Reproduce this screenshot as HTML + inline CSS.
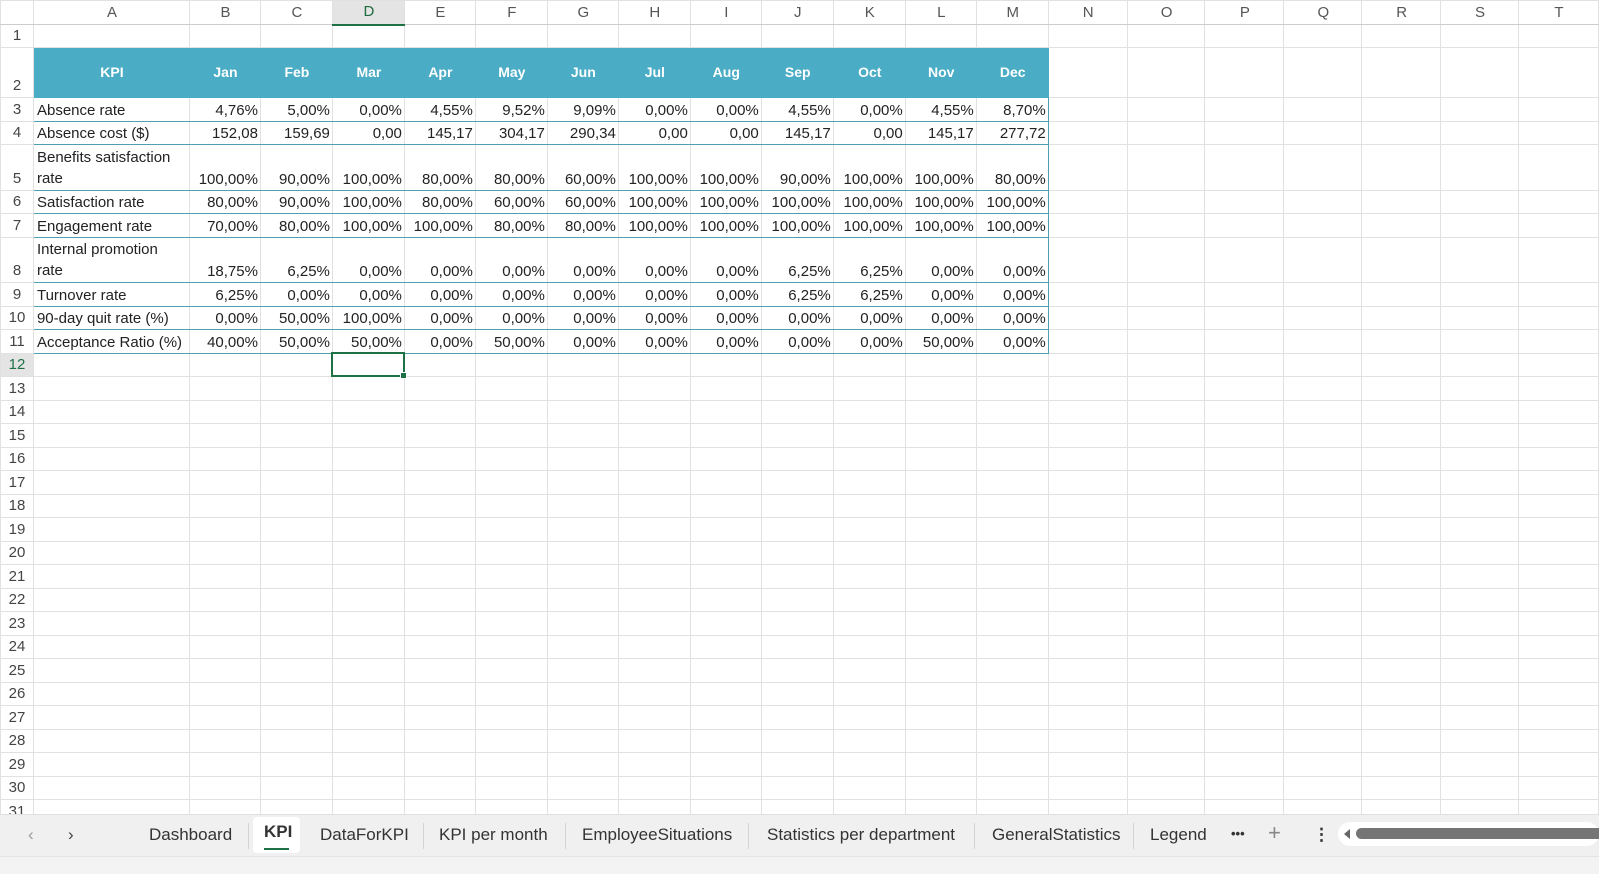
<!DOCTYPE html>
<html><head><meta charset="utf-8">
<style>
*{box-sizing:border-box;margin:0;padding:0}
body{width:1599px;height:874px;overflow:hidden;background:#fff;font-family:"Liberation Sans",sans-serif;position:relative}
table{border-collapse:collapse;table-layout:fixed;position:absolute;left:0;top:0}
td{border:1px solid #e1e1e1;font-size:15px;color:#222;white-space:nowrap;overflow:hidden;vertical-align:bottom;padding:0 2px 1px 3px;text-align:right;line-height:19px}
td.rh{text-align:center;color:#444;background:#fff;border-color:#e1e1e1;font-size:15px;padding:0 0 2px 0}
tr.ch td{background:#fff;text-align:center;color:#555;vertical-align:middle;border-bottom:1px solid #ccc;font-size:15px}
tr.ch td.sel{background:#e4e4e4;color:#1e6b3f;border-bottom:2px solid #1e7145}
td.l{text-align:left}
tr.hd td.k{background:#4aacc5;color:#fff;font-weight:bold;text-align:center;vertical-align:middle;border-color:#4aacc5;font-size:14px}
tr.d td.k{border-bottom:1px solid #4f9fb3}
td.m{border-right:1px solid #4f9fb3!important}
td.a{border-left:1px solid #4f9fb3}
.w{line-height:21px}
#sel{position:absolute;left:331px;top:352px;width:74px;height:25px;border:2px solid #1e7145}
#sel:after{content:"";position:absolute;right:-4px;bottom:-4px;width:5px;height:5px;background:#1e7145;border:1px solid #fff}
#tabs{position:absolute;left:0;top:814px;width:1599px;height:42px;background:#f0f0f0;border-top:1px solid #e0e0e0;font-size:17px;color:#333}
#tabs span{position:absolute;top:10px}
.sep{position:absolute;top:8px;width:1px;height:26px;background:#d4d4d4}
#bot{position:absolute;left:0;top:856px;width:1599px;height:18px;background:#f3f3f3;border-top:1px solid #e4e4e4}
</style></head><body>
<table>
<colgroup><col style="width:33px"><col style="width:156px"><col style="width:71px"><col style="width:72px"><col style="width:72px"><col style="width:71px"><col style="width:72px"><col style="width:71px"><col style="width:72px"><col style="width:71px"><col style="width:72px"><col style="width:72px"><col style="width:71px"><col style="width:72px"><col style="width:79px"><col style="width:78px"><col style="width:79px"><col style="width:78px"><col style="width:79px"><col style="width:78px"><col style="width:80px"></colgroup>
<tr class="ch" style="height:24px"><td style="background:#fff"></td><td>A</td><td>B</td><td>C</td><td class="sel">D</td><td>E</td><td>F</td><td>G</td><td>H</td><td>I</td><td>J</td><td>K</td><td>L</td><td>M</td><td>N</td><td>O</td><td>P</td><td>Q</td><td>R</td><td>S</td><td>T</td></tr>
<tr style="height:23px"><td class="rh">1</td><td></td><td></td><td></td><td></td><td></td><td></td><td></td><td></td><td></td><td></td><td></td><td></td><td></td><td></td><td></td><td></td><td></td><td></td><td></td><td></td></tr>
<tr class="hd" style="height:50px"><td class="rh">2</td><td class="k">KPI</td><td class="k">Jan</td><td class="k">Feb</td><td class="k">Mar</td><td class="k">Apr</td><td class="k">May</td><td class="k">Jun</td><td class="k">Jul</td><td class="k">Aug</td><td class="k">Sep</td><td class="k">Oct</td><td class="k">Nov</td><td class="k">Dec</td><td></td><td></td><td></td><td></td><td></td><td></td><td></td></tr>
<tr class="d" style="height:24px"><td class="rh">3</td><td class="k l a">Absence rate</td><td class="k">4,76%</td><td class="k">5,00%</td><td class="k">0,00%</td><td class="k">4,55%</td><td class="k">9,52%</td><td class="k">9,09%</td><td class="k">0,00%</td><td class="k">0,00%</td><td class="k">4,55%</td><td class="k">0,00%</td><td class="k">4,55%</td><td class="k m">8,70%</td><td></td><td></td><td></td><td></td><td></td><td></td><td></td></tr>
<tr class="d" style="height:23px"><td class="rh">4</td><td class="k l a">Absence cost ($)</td><td class="k">152,08</td><td class="k">159,69</td><td class="k">0,00</td><td class="k">145,17</td><td class="k">304,17</td><td class="k">290,34</td><td class="k">0,00</td><td class="k">0,00</td><td class="k">145,17</td><td class="k">0,00</td><td class="k">145,17</td><td class="k m">277,72</td><td></td><td></td><td></td><td></td><td></td><td></td><td></td></tr>
<tr class="d" style="height:46px"><td class="rh">5</td><td class="k l a w">Benefits satisfaction<br>rate</td><td class="k">100,00%</td><td class="k">90,00%</td><td class="k">100,00%</td><td class="k">80,00%</td><td class="k">80,00%</td><td class="k">60,00%</td><td class="k">100,00%</td><td class="k">100,00%</td><td class="k">90,00%</td><td class="k">100,00%</td><td class="k">100,00%</td><td class="k m">80,00%</td><td></td><td></td><td></td><td></td><td></td><td></td><td></td></tr>
<tr class="d" style="height:23px"><td class="rh">6</td><td class="k l a">Satisfaction rate</td><td class="k">80,00%</td><td class="k">90,00%</td><td class="k">100,00%</td><td class="k">80,00%</td><td class="k">60,00%</td><td class="k">60,00%</td><td class="k">100,00%</td><td class="k">100,00%</td><td class="k">100,00%</td><td class="k">100,00%</td><td class="k">100,00%</td><td class="k m">100,00%</td><td></td><td></td><td></td><td></td><td></td><td></td><td></td></tr>
<tr class="d" style="height:24px"><td class="rh">7</td><td class="k l a">Engagement rate</td><td class="k">70,00%</td><td class="k">80,00%</td><td class="k">100,00%</td><td class="k">100,00%</td><td class="k">80,00%</td><td class="k">80,00%</td><td class="k">100,00%</td><td class="k">100,00%</td><td class="k">100,00%</td><td class="k">100,00%</td><td class="k">100,00%</td><td class="k m">100,00%</td><td></td><td></td><td></td><td></td><td></td><td></td><td></td></tr>
<tr class="d" style="height:45px"><td class="rh">8</td><td class="k l a w">Internal promotion<br>rate</td><td class="k">18,75%</td><td class="k">6,25%</td><td class="k">0,00%</td><td class="k">0,00%</td><td class="k">0,00%</td><td class="k">0,00%</td><td class="k">0,00%</td><td class="k">0,00%</td><td class="k">6,25%</td><td class="k">6,25%</td><td class="k">0,00%</td><td class="k m">0,00%</td><td></td><td></td><td></td><td></td><td></td><td></td><td></td></tr>
<tr class="d" style="height:24px"><td class="rh">9</td><td class="k l a">Turnover rate</td><td class="k">6,25%</td><td class="k">0,00%</td><td class="k">0,00%</td><td class="k">0,00%</td><td class="k">0,00%</td><td class="k">0,00%</td><td class="k">0,00%</td><td class="k">0,00%</td><td class="k">6,25%</td><td class="k">6,25%</td><td class="k">0,00%</td><td class="k m">0,00%</td><td></td><td></td><td></td><td></td><td></td><td></td><td></td></tr>
<tr class="d" style="height:23px"><td class="rh">10</td><td class="k l a">90-day quit rate (%)</td><td class="k">0,00%</td><td class="k">50,00%</td><td class="k">100,00%</td><td class="k">0,00%</td><td class="k">0,00%</td><td class="k">0,00%</td><td class="k">0,00%</td><td class="k">0,00%</td><td class="k">0,00%</td><td class="k">0,00%</td><td class="k">0,00%</td><td class="k m">0,00%</td><td></td><td></td><td></td><td></td><td></td><td></td><td></td></tr>
<tr class="d" style="height:24px"><td class="rh">11</td><td class="k l a">Acceptance Ratio (%)</td><td class="k">40,00%</td><td class="k">50,00%</td><td class="k">50,00%</td><td class="k">0,00%</td><td class="k">50,00%</td><td class="k">0,00%</td><td class="k">0,00%</td><td class="k">0,00%</td><td class="k">0,00%</td><td class="k">0,00%</td><td class="k">50,00%</td><td class="k m">0,00%</td><td></td><td></td><td></td><td></td><td></td><td></td><td></td></tr>
<tr style="height:23px"><td class="rh" style="color:#1e7145;background:#e4e4e4">12</td><td></td><td></td><td></td><td></td><td></td><td></td><td></td><td></td><td></td><td></td><td></td><td></td><td></td><td></td><td></td><td></td><td></td><td></td><td></td><td></td></tr>
<tr style="height:24px"><td class="rh">13</td><td></td><td></td><td></td><td></td><td></td><td></td><td></td><td></td><td></td><td></td><td></td><td></td><td></td><td></td><td></td><td></td><td></td><td></td><td></td><td></td></tr>
<tr style="height:23px"><td class="rh">14</td><td></td><td></td><td></td><td></td><td></td><td></td><td></td><td></td><td></td><td></td><td></td><td></td><td></td><td></td><td></td><td></td><td></td><td></td><td></td><td></td></tr>
<tr style="height:24px"><td class="rh">15</td><td></td><td></td><td></td><td></td><td></td><td></td><td></td><td></td><td></td><td></td><td></td><td></td><td></td><td></td><td></td><td></td><td></td><td></td><td></td><td></td></tr>
<tr style="height:23px"><td class="rh">16</td><td></td><td></td><td></td><td></td><td></td><td></td><td></td><td></td><td></td><td></td><td></td><td></td><td></td><td></td><td></td><td></td><td></td><td></td><td></td><td></td></tr>
<tr style="height:24px"><td class="rh">17</td><td></td><td></td><td></td><td></td><td></td><td></td><td></td><td></td><td></td><td></td><td></td><td></td><td></td><td></td><td></td><td></td><td></td><td></td><td></td><td></td></tr>
<tr style="height:23px"><td class="rh">18</td><td></td><td></td><td></td><td></td><td></td><td></td><td></td><td></td><td></td><td></td><td></td><td></td><td></td><td></td><td></td><td></td><td></td><td></td><td></td><td></td></tr>
<tr style="height:24px"><td class="rh">19</td><td></td><td></td><td></td><td></td><td></td><td></td><td></td><td></td><td></td><td></td><td></td><td></td><td></td><td></td><td></td><td></td><td></td><td></td><td></td><td></td></tr>
<tr style="height:23px"><td class="rh">20</td><td></td><td></td><td></td><td></td><td></td><td></td><td></td><td></td><td></td><td></td><td></td><td></td><td></td><td></td><td></td><td></td><td></td><td></td><td></td><td></td></tr>
<tr style="height:24px"><td class="rh">21</td><td></td><td></td><td></td><td></td><td></td><td></td><td></td><td></td><td></td><td></td><td></td><td></td><td></td><td></td><td></td><td></td><td></td><td></td><td></td><td></td></tr>
<tr style="height:23px"><td class="rh">22</td><td></td><td></td><td></td><td></td><td></td><td></td><td></td><td></td><td></td><td></td><td></td><td></td><td></td><td></td><td></td><td></td><td></td><td></td><td></td><td></td></tr>
<tr style="height:24px"><td class="rh">23</td><td></td><td></td><td></td><td></td><td></td><td></td><td></td><td></td><td></td><td></td><td></td><td></td><td></td><td></td><td></td><td></td><td></td><td></td><td></td><td></td></tr>
<tr style="height:23px"><td class="rh">24</td><td></td><td></td><td></td><td></td><td></td><td></td><td></td><td></td><td></td><td></td><td></td><td></td><td></td><td></td><td></td><td></td><td></td><td></td><td></td><td></td></tr>
<tr style="height:24px"><td class="rh">25</td><td></td><td></td><td></td><td></td><td></td><td></td><td></td><td></td><td></td><td></td><td></td><td></td><td></td><td></td><td></td><td></td><td></td><td></td><td></td><td></td></tr>
<tr style="height:23px"><td class="rh">26</td><td></td><td></td><td></td><td></td><td></td><td></td><td></td><td></td><td></td><td></td><td></td><td></td><td></td><td></td><td></td><td></td><td></td><td></td><td></td><td></td></tr>
<tr style="height:24px"><td class="rh">27</td><td></td><td></td><td></td><td></td><td></td><td></td><td></td><td></td><td></td><td></td><td></td><td></td><td></td><td></td><td></td><td></td><td></td><td></td><td></td><td></td></tr>
<tr style="height:23px"><td class="rh">28</td><td></td><td></td><td></td><td></td><td></td><td></td><td></td><td></td><td></td><td></td><td></td><td></td><td></td><td></td><td></td><td></td><td></td><td></td><td></td><td></td></tr>
<tr style="height:24px"><td class="rh">29</td><td></td><td></td><td></td><td></td><td></td><td></td><td></td><td></td><td></td><td></td><td></td><td></td><td></td><td></td><td></td><td></td><td></td><td></td><td></td><td></td></tr>
<tr style="height:23px"><td class="rh">30</td><td></td><td></td><td></td><td></td><td></td><td></td><td></td><td></td><td></td><td></td><td></td><td></td><td></td><td></td><td></td><td></td><td></td><td></td><td></td><td></td></tr>
<tr style="height:24px"><td class="rh">31</td><td></td><td></td><td></td><td></td><td></td><td></td><td></td><td></td><td></td><td></td><td></td><td></td><td></td><td></td><td></td><td></td><td></td><td></td><td></td><td></td></tr>
</table>
<div id="sel"></div>
<div id="tabs">
<span style="left:28px;color:#999">&#8249;</span><span style="left:68px;color:#444">&#8250;</span>
<span style="left:149px">Dashboard</span><div class="sep" style="left:248px"></div>
<div style="position:absolute;left:253px;top:2px;width:47px;height:36px;background:#fff;border-radius:4px"></div>
<span style="left:264px;font-weight:bold;top:7px">KPI</span><div style="position:absolute;left:264px;top:33px;width:25px;height:2px;background:#1e7145"></div>
<span style="left:320px">DataForKPI</span><div class="sep" style="left:423px"></div>
<span style="left:439px">KPI per month</span><div class="sep" style="left:565px"></div>
<span style="left:582px">EmployeeSituations</span><div class="sep" style="left:748px"></div>
<span style="left:767px">Statistics per department</span><div class="sep" style="left:974px"></div>
<span style="left:992px">GeneralStatistics</span><div class="sep" style="left:1133px"></div>
<span style="left:1150px">Legend</span>
<span style="left:1231px;font-size:13px;top:11px;font-weight:bold">&#8226;&#8226;&#8226;</span>
<span style="left:1268px;color:#888;font-size:22px;top:5px">+</span>
<span style="left:1313px;font-weight:bold">&#8942;</span>
<div style="position:absolute;left:1338px;top:7px;width:261px;height:24px;background:#fff;border-radius:12px"></div>
<div style="position:absolute;left:1344px;top:14px;width:0;height:0;border-top:5px solid transparent;border-bottom:5px solid transparent;border-right:6px solid #666"></div>
<div style="position:absolute;left:1356px;top:13px;width:243px;height:11px;background:#757575;border-radius:6px 0 0 6px"></div>
</div>
<div id="bot"></div>
</body></html>
